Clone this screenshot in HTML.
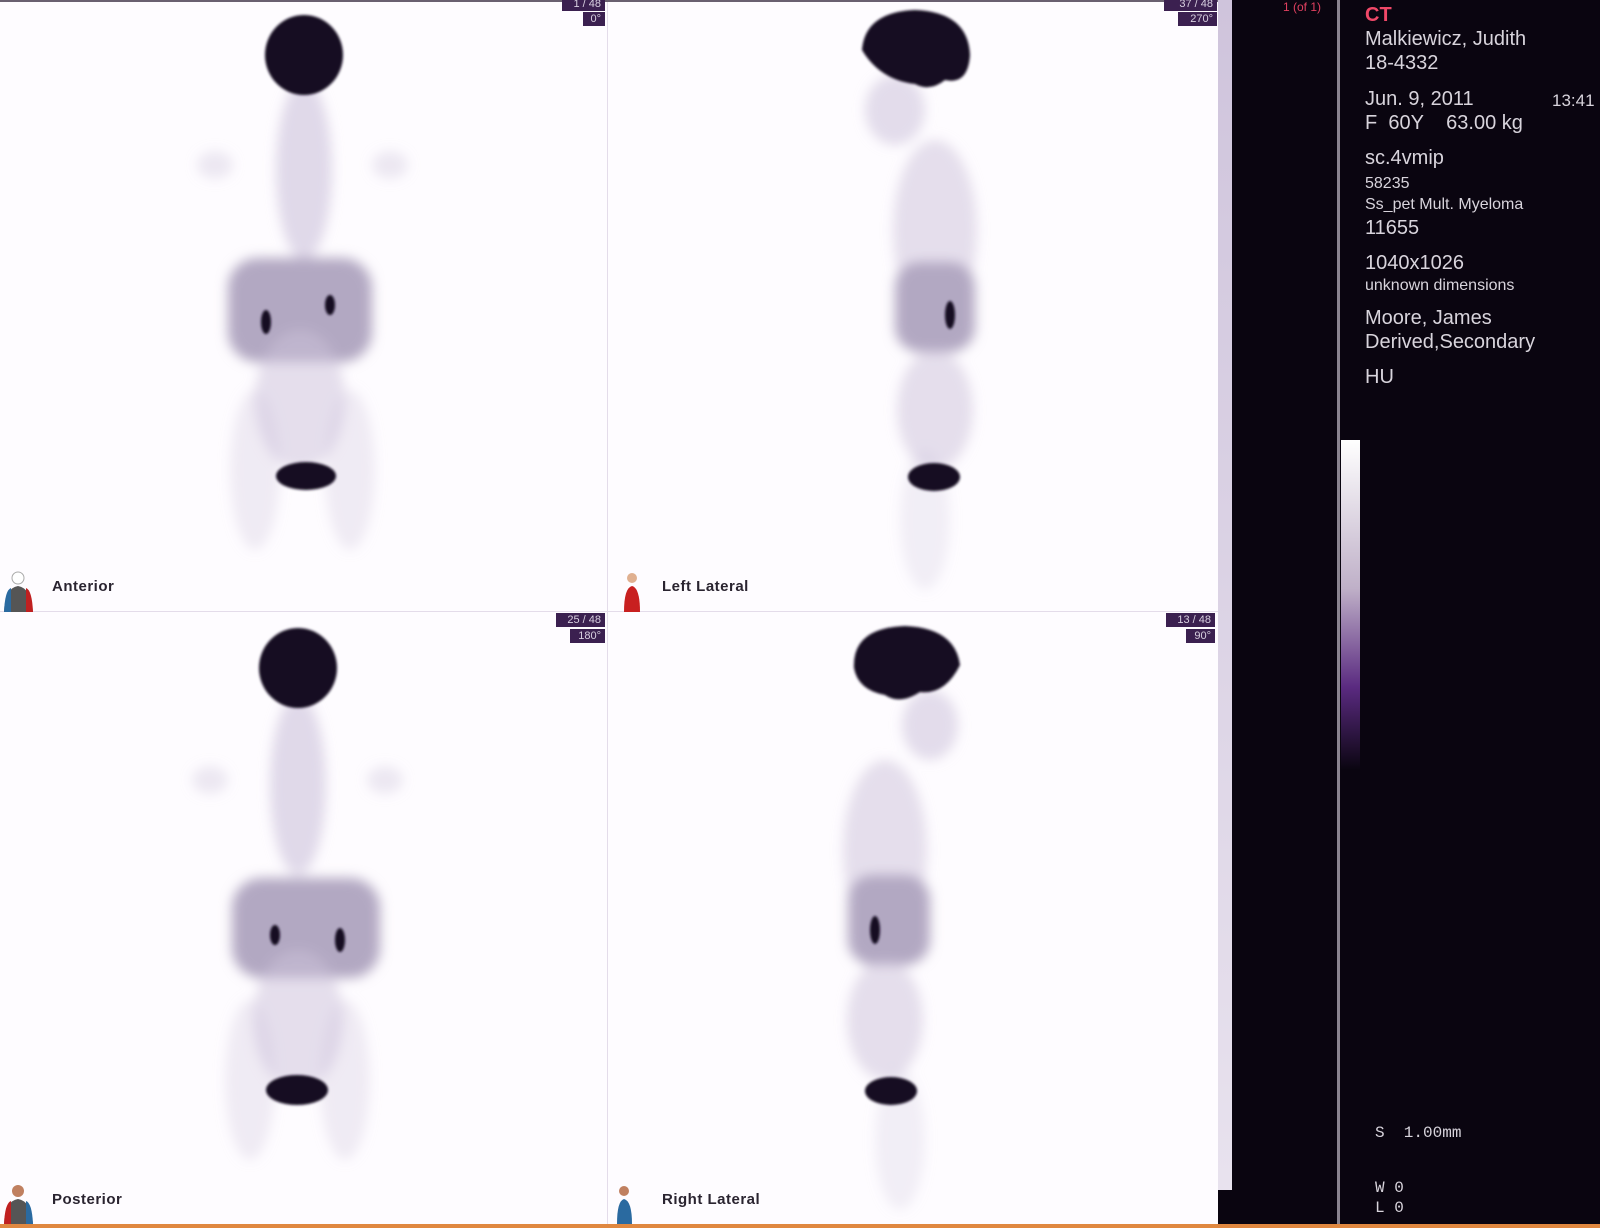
<!DOCTYPE html>
<html><head><meta charset="utf-8"><style>
html,body{margin:0;padding:0;width:1600px;height:1228px;overflow:hidden;background:#0a0510;font-family:"Liberation Sans",sans-serif}
.lbl{position:absolute;font-weight:bold;font-size:15px;color:#2a2430;letter-spacing:0.5px}
.bd{position:absolute;background:#3b2050;color:#d8d0e0;font-size:11px;line-height:14px;padding:0 4px;text-align:right}
.t{position:absolute;left:1365px;color:#d8d4dc;font-size:20px;line-height:24px;white-space:nowrap}
</style></head><body>
<svg width="1600" height="1228" style="position:absolute;left:0;top:0">
<defs>
<filter id="b" x="-50%" y="-50%" width="200%" height="200%"><feGaussianBlur stdDeviation="6"/></filter>
<filter id="s" x="-20%" y="-20%" width="140%" height="140%"><feGaussianBlur stdDeviation="1.2"/></filter>
<linearGradient id="cb" x1="0" y1="0" x2="0" y2="1"><stop offset="0" stop-color="#fff"/><stop offset="0.45" stop-color="#bfb0c8"/><stop offset="0.75" stop-color="#5a2a80"/><stop offset="1" stop-color="#0a0510"/></linearGradient>
<linearGradient id="st" x1="0" y1="0" x2="0" y2="1"><stop offset="0" stop-color="#cfc4dc"/><stop offset="1" stop-color="#e8e2ee"/></linearGradient>
</defs>
<rect x="0" y="0" width="1600" height="1228" fill="#0a0510"/>
<rect x="0" y="0" width="1218" height="1224" fill="#fefcff"/>
<rect x="607" y="0" width="1" height="1224" fill="#e4dcea"/>
<rect x="0" y="611" width="1218" height="1" fill="#e4dcea"/>
<rect x="0" y="0" width="1218" height="2" fill="#6a6070"/>
<rect x="1218" y="0" width="14" height="1190" fill="url(#st)"/>
<rect x="1337" y="0" width="3" height="1224" fill="#8a8490"/>
<rect x="1341" y="440" width="19" height="330" fill="url(#cb)"/>
<rect x="0" y="1224" width="1600" height="4" fill="#e08840"/>

<!-- Anterior -->
<g filter="url(#b)" fill="#ccc2da">
<ellipse cx="304" cy="170" rx="28" ry="90" opacity=".6"/>
<rect x="228" y="258" width="144" height="104" rx="30" fill="#b2a8c2"/>
<ellipse cx="300" cy="400" rx="45" ry="70" opacity=".5"/>
<ellipse cx="255" cy="470" rx="25" ry="80" opacity=".3"/>
<ellipse cx="350" cy="470" rx="25" ry="80" opacity=".3"/>
<ellipse cx="215" cy="165" rx="18" ry="14" opacity=".35"/><ellipse cx="390" cy="165" rx="18" ry="14" opacity=".35"/>
</g>
<g filter="url(#s)" fill="#140a20">
<ellipse cx="304" cy="55" rx="39" ry="40"/>
<ellipse cx="306" cy="476" rx="30" ry="14"/>
<ellipse cx="266" cy="322" rx="5" ry="12"/><ellipse cx="330" cy="305" rx="5" ry="10"/>
</g>
<!-- Left lateral -->
<g filter="url(#b)" fill="#ccc2da">
<ellipse cx="895" cy="110" rx="30" ry="35" opacity=".55"/>
<ellipse cx="935" cy="230" rx="42" ry="90" opacity=".5"/>
<rect x="895" y="262" width="80" height="90" rx="25" fill="#b2a8c2"/>
<ellipse cx="935" cy="410" rx="38" ry="60" opacity=".5"/>
<ellipse cx="925" cy="520" rx="25" ry="70" opacity=".25"/>
</g>
<g filter="url(#s)" fill="#140a20">
<path d="M862 50 Q865 12 915 10 Q968 12 970 55 Q968 85 945 80 Q930 92 915 84 Q880 80 862 50Z"/>
<ellipse cx="934" cy="477" rx="26" ry="14"/>
<ellipse cx="950" cy="315" rx="5" ry="14"/>
</g>
<!-- Posterior -->
<g filter="url(#b)" fill="#ccc2da">
<ellipse cx="298" cy="785" rx="28" ry="90" opacity=".6"/>
<rect x="232" y="878" width="148" height="100" rx="30" fill="#b2a8c2"/>
<ellipse cx="298" cy="1020" rx="45" ry="70" opacity=".5"/>
<ellipse cx="250" cy="1080" rx="25" ry="80" opacity=".3"/>
<ellipse cx="345" cy="1080" rx="25" ry="80" opacity=".3"/>
<ellipse cx="210" cy="780" rx="18" ry="14" opacity=".35"/><ellipse cx="385" cy="780" rx="18" ry="14" opacity=".35"/>
</g>
<g filter="url(#s)" fill="#140a20">
<ellipse cx="298" cy="668" rx="39" ry="40"/>
<ellipse cx="297" cy="1090" rx="31" ry="15"/>
<ellipse cx="275" cy="935" rx="5" ry="10"/><ellipse cx="340" cy="940" rx="5" ry="12"/>
</g>
<!-- Right lateral -->
<g filter="url(#b)" fill="#ccc2da">
<ellipse cx="930" cy="725" rx="28" ry="35" opacity=".55"/>
<ellipse cx="885" cy="850" rx="42" ry="90" opacity=".5"/>
<rect x="848" y="875" width="82" height="90" rx="25" fill="#b2a8c2"/>
<ellipse cx="885" cy="1020" rx="38" ry="60" opacity=".5"/>
<ellipse cx="900" cy="1140" rx="25" ry="70" opacity=".25"/>
</g>
<g filter="url(#s)" fill="#140a20">
<path d="M854 668 Q852 628 905 626 Q955 628 960 665 Q945 695 920 692 Q900 705 885 695 Q858 690 854 668Z"/>
<ellipse cx="891" cy="1091" rx="26" ry="14"/>
<ellipse cx="875" cy="930" rx="5" ry="14"/>
</g>

<g>
<circle cx="18" cy="578" r="6" fill="#fff" stroke="#aaa"/>
<path d="M4 612 Q5 588 18 586 Q31 588 33 612Z" fill="#555"/><path d="M4 612 Q5 590 11 588 L11 612Z" fill="#2a6aa0"/><path d="M33 612 Q32 590 26 588 L26 612Z" fill="#c02020"/>
<circle cx="632" cy="578" r="5" fill="#e0b090"/>
<path d="M624 612 Q624 588 632 586 Q640 588 640 612Z" fill="#c82020"/>
<circle cx="18" cy="1191" r="6" fill="#c08060"/>
<path d="M4 1224 Q5 1201 18 1199 Q31 1201 33 1224Z" fill="#555"/><path d="M4 1224 Q5 1203 11 1201 L11 1224Z" fill="#c02020"/><path d="M33 1224 Q32 1203 26 1201 L26 1224Z" fill="#2a6aa0"/>
<circle cx="624" cy="1191" r="5" fill="#c08060"/>
<path d="M617 1224 Q617 1201 624 1199 Q632 1201 632 1224Z" fill="#2a6aa0"/>
</g>
</svg>

<div class="lbl" style="left:52px;top:578px">Anterior</div>
<div class="lbl" style="left:662px;top:578px">Left Lateral</div>
<div class="lbl" style="left:52px;top:1191px">Posterior</div>
<div class="lbl" style="left:662px;top:1191px">Right Lateral</div>

<div class="bd" style="left:562px;top:-3px;width:35px">1 / 48</div>
<div class="bd" style="left:583px;top:12px;width:14px">0°</div>
<div class="bd" style="left:1164px;top:-3px;width:45px">37 / 48</div>
<div class="bd" style="left:1178px;top:12px;width:31px">270°</div>
<div class="bd" style="left:556px;top:613px;width:41px">25 / 48</div>
<div class="bd" style="left:570px;top:629px;width:27px">180°</div>
<div class="bd" style="left:1166px;top:613px;width:41px">13 / 48</div>
<div class="bd" style="left:1186px;top:629px;width:21px">90°</div>

<div style="position:absolute;left:1283px;top:0px;color:#e04060;font-size:12px">1 (of 1)</div>
<div class="t" style="top:3px;color:#f04868;font-weight:bold">CT</div>
<div class="t" style="top:27px">Malkiewicz, Judith</div>
<div class="t" style="top:51px">18-4332</div>
<div class="t" style="top:87px">Jun. 9, 2011</div>
<div class="t" style="top:89px;left:1552px;font-size:17px">13:41</div>
<div class="t" style="top:111px">F&nbsp; 60Y&nbsp;&nbsp;&nbsp; 63.00 kg</div>
<div class="t" style="top:146px">sc.4vmip</div>
<div class="t" style="top:172px;font-size:16px">58235</div>
<div class="t" style="top:193px;font-size:16px">Ss_pet Mult. Myeloma</div>
<div class="t" style="top:216px">11655</div>
<div class="t" style="top:251px">1040x1026</div>
<div class="t" style="top:274px;font-size:16px">unknown dimensions</div>
<div class="t" style="top:306px">Moore, James</div>
<div class="t" style="top:330px">Derived,Secondary</div>
<div class="t" style="top:365px">HU</div>
<div class="t" style="top:1121px;left:1375px;font-family:'Liberation Mono',monospace;font-size:16px">S&nbsp; 1.00mm</div>
<div class="t" style="top:1178px;left:1375px;font-family:'Liberation Mono',monospace;font-size:16px;line-height:20px">W 0<br>L 0</div>
</body></html>
